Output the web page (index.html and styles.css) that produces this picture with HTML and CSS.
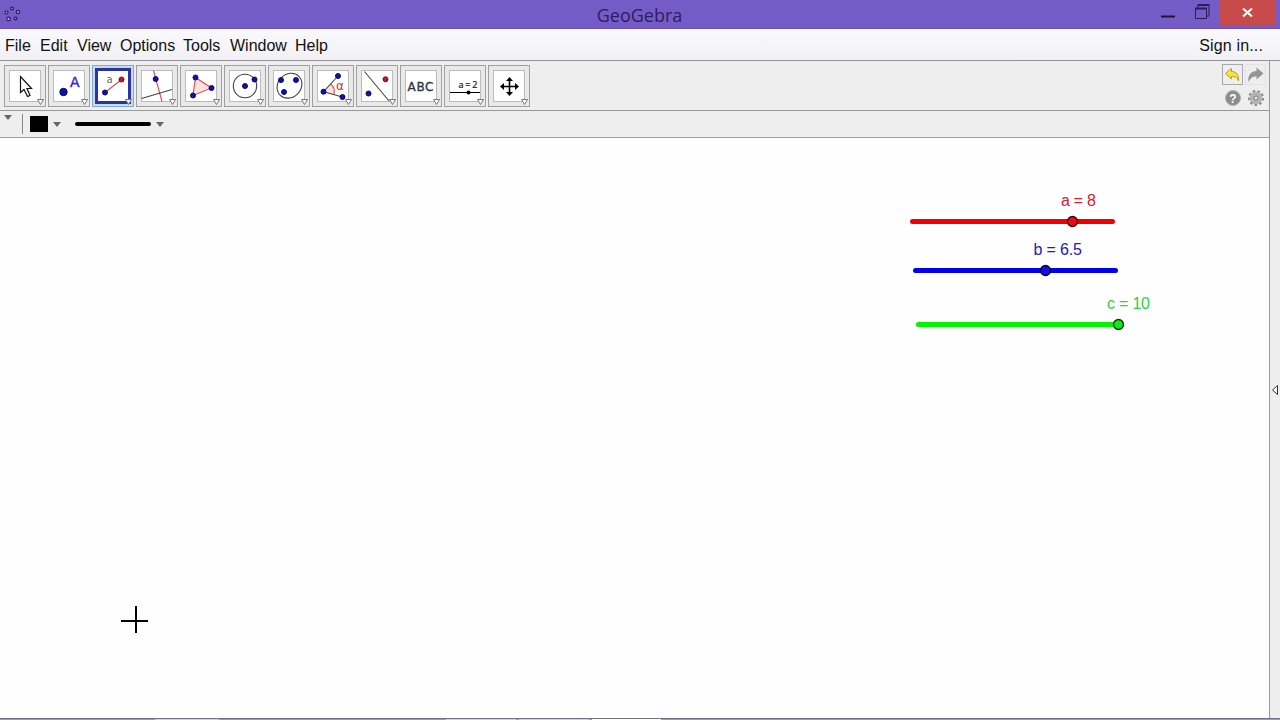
FILE: index.html
```html
<!DOCTYPE html>
<html lang="en">
<head>
  <meta charset="UTF-8">
  <title>GeoGebra</title>
  <link rel="stylesheet" href="styles.css">
</head>
<body>
  <div class="window">
    <div class="titlebar">
      <svg class="logo" width="18" height="16" viewBox="0 0 18 16">
        <g fill="#a99ce0" stroke="#2c1d60" stroke-width="1.200">
          <circle cx="8" cy="2.500" r="1.400"/><circle cx="14" cy="6" r="1.700"/><circle cx="11.500" cy="12.500" r="1.300"/>
          <circle cx="4.500" cy="13" r="1.800"/><circle cx="2.500" cy="6.500" r="1.500"/>
        </g>
      </svg>
      <div class="title">GeoGebra</div>
      <div class="controls">
        <svg width="70" height="29" viewBox="0 0 70 29">
          <path d="M12 16.500H26" stroke="#211638" stroke-width="2"/>
          <path d="M46.500 8.500h11v10h-11zM49 8V5.500h11V16h-2" fill="none" stroke="#2c1c5c"/>
          <path d="M46 8.500h12M48.500 5h12" stroke="#2c1c5c" stroke-width="2"/>
        </svg>
        <div class="close">
          <svg width="11" height="9" viewBox="0 0 11 9"><path d="M1 .5L10 8.500M10 .5L1 8.500" stroke="#fff" stroke-width="2"/></svg>
        </div>
      </div>
    </div>

    <div class="menubar">
      <div class="menu">
        <span class="file">File</span>
        <span class="edit">Edit</span>
        <span class="view">View</span>
        <span class="options">Options</span>
        <span class="tools">Tools</span>
        <span class="win">Window</span>
        <span>Help</span>
      </div>
      <span class="signin">Sign in...</span>
    </div>

    <div class="content">
      <div class="main">
        <div class="toolbar">
          <div class="buttons">
            <div class="tool">
              <svg width="42" height="42" viewBox="0 0 42 42">
                <path d="M16.500 11.500V27.500L20 24.500L23.500 31.500L26 30.500L23 23.500H27.500Z" fill="#fff" stroke="#111" stroke-width="1.2"/>
                <path class="more" d="M33.500 34.500h6l-3 5z"/>
              </svg>
            </div>
            <div class="tool">
              <svg width="42" height="42" viewBox="0 0 42 42">
                <circle class="pt" cx="15.500" cy="27" r="3.700"/>
                <text class="label-a" x="22" y="22">A</text>
                <path class="more" d="M33.500 34.500h6l-3 5z"/>
              </svg>
            </div>
            <div class="tool selected">
              <svg width="42" height="42" viewBox="0 0 42 42">
                <path class="red" d="M13 27.500L29.500 14.500"/>
                <circle class="pt" cx="13" cy="27.500" r="2.500"/>
                <circle class="pt-red" cx="29.500" cy="14.500" r="2.500"/>
                <text class="label-seg" x="14.500" y="18">a</text>
                <path class="more" d="M33.500 34.500h6l-3 5z"/>
              </svg>
            </div>
            <div class="tool">
              <svg width="42" height="42" viewBox="0 0 42 42">
                <path class="red" d="M17.500 5.500L26 36.500"/>
                <path class="dark" d="M5.500 33.500L36 24.500"/>
                <circle class="pt" cx="19.700" cy="14" r="2.500"/>
                <path class="more" d="M33.500 34.500h6l-3 5z"/>
              </svg>
            </div>
            <div class="tool">
              <svg width="42" height="42" viewBox="0 0 42 42">
                <path class="red area" d="M15.500 12.500L31.500 23L13 30.500Z"/>
                <circle class="pt" cx="15.500" cy="12.500" r="2.500"/>
                <circle class="pt" cx="31.500" cy="23" r="2.500"/>
                <circle class="pt" cx="13" cy="30.500" r="2.500"/>
                <path class="more" d="M33.500 34.500h6l-3 5z"/>
              </svg>
            </div>
            <div class="tool">
              <svg width="42" height="42" viewBox="0 0 42 42">
                <circle class="dark" cx="21" cy="21" r="11.700"/>
                <circle class="pt" cx="21" cy="21" r="2.500"/>
                <circle class="pt" cx="30.500" cy="14.500" r="2.500"/>
                <path class="more" d="M33.500 34.500h6l-3 5z"/>
              </svg>
            </div>
            <div class="tool">
              <svg width="42" height="42" viewBox="0 0 42 42">
                <ellipse class="dark" cx="21.500" cy="20.700" rx="13.300" ry="11.500" transform="rotate(-45 21.500 20.700)"/>
                <circle class="pt" cx="13" cy="15" r="2.500"/>
                <circle class="pt" cx="28" cy="15" r="2.500"/>
                <circle class="pt" cx="16" cy="27" r="2.500"/>
                <path class="more" d="M33.500 34.500h6l-3 5z"/>
              </svg>
            </div>
            <div class="tool">
              <svg width="42" height="42" viewBox="0 0 42 42">
                <path d="M11.500 26.700L19 18.500Q23.500 22.500 22 29.500Z" fill="#ffe0dc"/>
                <path class="red" d="M18.500 19Q23.500 22.500 22 29.500"/>
                <path class="dark" d="M26 11L11.500 26.700L30.500 32"/>
                <circle class="pt" cx="26" cy="11" r="2.500"/>
                <circle class="pt" cx="11.500" cy="26.700" r="2.500"/>
                <circle class="pt" cx="30.500" cy="32" r="2.500"/>
                <text class="alpha" x="24" y="25">α</text>
                <path class="more" d="M33.500 34.500h6l-3 5z"/>
              </svg>
            </div>
            <div class="tool">
              <svg width="42" height="42" viewBox="0 0 42 42">
                <path class="dark" d="M8.500 6.500L33 36"/>
                <circle class="pt" cx="12.500" cy="28.500" r="2.500"/>
                <circle class="pt-red" cx="29.500" cy="14.300" r="2.500"/>
                <path class="more" d="M33.500 34.500h6l-3 5z"/>
              </svg>
            </div>
            <div class="tool">
              <svg width="42" height="42" viewBox="0 0 42 42">
                <text class="abc" x="7.500" y="25.500" textLength="26">ABC</text>
                <path class="more" d="M33.500 34.500h6l-3 5z"/>
              </svg>
            </div>
            <div class="tool">
              <svg width="42" height="42" viewBox="0 0 42 42">
                <text class="a2" x="14.500" y="23" textLength="19">a=2</text>
                <path d="M6 27.500H36" stroke="#000"/>
                <circle cx="24.500" cy="27.500" r="2"/>
                <path class="more" d="M33.500 34.500h6l-3 5z"/>
              </svg>
            </div>
            <div class="tool">
              <svg width="42" height="42" viewBox="0 0 42 42">
                <path d="M21.500 14V29M14 21.500H29" stroke="#000" stroke-width="1.600"/>
                <path d="M21.500 12l3.500 4h-7zM21.500 31l3.500-4h-7zM12 21.500l4-3.500v7zM31 21.500l-4-3.500v7z"/>
                <path class="more" d="M33.500 34.500h6l-3 5z"/>
              </svg>
            </div>
          </div>
          <div class="actions">
            <div class="action undo">
              <svg width="17" height="16" viewBox="0 0 17 16"><path d="M1.500 6.500L7.500 1.500V4.500C12.500 4.500 15 8 14.500 14C13 10.500 11 9 7.500 9.500V12Z" fill="#f5e53a" stroke="#b59f18"/></svg>
            </div>
            <div class="action redo">
              <svg width="17" height="16" viewBox="0 0 17 16"><path d="M16.500 6.500L9.500 .5V4C4 4 .5 8 1.500 15C4 10.500 6 9.500 9.500 9.500V12.500Z" fill="#959595"/></svg>
            </div>
            <div class="action">
              <svg width="18" height="18" viewBox="0 0 18 18"><circle cx="9" cy="9" r="7.500" fill="#8c8c8c" stroke="#b0b0b0"/><text class="question" x="9" y="13.500">?</text></svg>
            </div>
            <div class="action">
              <svg width="18" height="18" viewBox="0 0 18 18">
                <circle cx="9" cy="9" r="6.800" fill="none" stroke="#8c8c8c" stroke-width="2.400" stroke-dasharray="2.600 2.150"/>
                <circle cx="9" cy="9" r="4.200" fill="none" stroke="#b4b4b4" stroke-width="4"/>
                <circle cx="9" cy="9" r="2" fill="#eee" stroke="#777"/>
              </svg>
            </div>
          </div>
        </div>

        <div class="stylebar">
          <span class="arrow first"></span>
          <span class="divider"></span>
          <span class="swatch"></span>
          <span class="arrow"></span>
          <span class="line"></span>
          <span class="arrow"></span>
        </div>

        <div class="canvas">
          <svg width="1269" height="580" viewBox="0 138 1269 580">
            <g stroke-width="5" stroke-linecap="round">
              <path d="M912.500 221.500H1112.500" stroke="#f00000"/>
              <path d="M915.500 270.500H1115.500" stroke="#0000f0"/>
              <path d="M918.500 324.500H1118.500" stroke="#00f500"/>
            </g>
            <g stroke-width="1.300">
              <circle cx="1072.500" cy="221.500" r="5" fill="#e01020" stroke="#400"/>
              <circle cx="1045.500" cy="270.500" r="5" fill="#1212d8" stroke="#004"/>
              <circle cx="1118.500" cy="324.500" r="5" fill="#10e818" stroke="#030"/>
            </g>
            <text class="value" x="1061" y="206" textLength="35" fill="#d42030">a = 8</text>
            <text class="value" x="1033.500" y="255" textLength="48.500" fill="#2020b8">b = 6.5</text>
            <text class="value" x="1107" y="309" textLength="43" fill="#30d040">c = 10</text>
            <path d="M121 621H148M136 606V633" stroke="#000" stroke-width="2"/>
          </svg>
        </div>
      </div>
      <div class="side">
        <svg width="8" height="12" viewBox="0 0 8 12"><path d="M6.500 1.500V10.500L1.500 6Z" fill="#fff" stroke="#333"/></svg>
      </div>
    </div>
    <div class="taskbar">
      <span class="task t1"></span>
      <span class="task t2"></span>
      <span class="task t3"></span>
      <span class="task t4"></span>
    </div>
  </div>
</body>
</html>
```
FILE: styles.css
```css
*{
  box-sizing: border-box;
}
body{
  margin: 0;
  background: #fff;
  font-family: "Liberation Sans", Arial, sans-serif;
}
svg{
  display: block;
}
.window{
  display: flex;
  flex-direction: column;
  width: 1280px;
  height: 720px;
  overflow: hidden;
}

/* title bar */
.titlebar{
  display: grid;
  grid-template-columns: 150px 1fr 131px;
  height: 29px;
  background: #745bc5;
  border-bottom: 1px solid #6a52b4;
}
.logo{
  margin: 6px 0 0 4px;
}
.title{
  padding-top: 3px;
  padding-right: 20px;
  text-align: center;
  font: 18px/25px "Open Sans", sans-serif;
  color: #2f1c60;
}
.controls{
  display: flex;
}
.close{
  display: flex;
  align-items: center;
  justify-content: center;
  width: 57px;
  height: 25px;
  background: #c84b4c;
}

/* menu */
.menubar{
  display: flex;
  justify-content: space-between;
  height: 32px;
  padding: 0 17px 0 5px;
  border-bottom: 1px solid #949494;
  background: linear-gradient(#fafafd, #f1f1f5);
  font-size: 16px;
  line-height: 33px;
  color: #111;
}
.menu{
  display: flex;
}
.file{ width: 35px; }
.edit{ width: 37px; }
.view{ width: 43px; }
.options{ width: 63px; }
.tools{ width: 47px; }
.win{ width: 65px; }
.signin{
  letter-spacing: .15px;
}

.content{
  display: flex;
  flex: 1;
  min-height: 0;
}
.main{
  display: flex;
  flex-direction: column;
  width: 1269px;
}

/* toolbar */
.toolbar{
  display: flex;
  justify-content: space-between;
  height: 50px;
  padding: 4px 3px 0 4px;
  background: #eee;
  border-bottom: 1px solid #999;
}
.buttons{
  display: flex;
  gap: 2px;
}
.tool{
  width: 42px;
  height: 42px;
  border: 1px solid #a0a0a0;
  background: linear-gradient(#fff, #fff) center / 30px 30px no-repeat, linear-gradient(#bbb, #bbb) center / 32px 32px no-repeat, #e9e9e9;
}
.tool svg{
  margin: -1px;
}
.tool.selected{
  border-color: #7fa8dc;
  background: linear-gradient(#fff, #fff) center / 30px 30px no-repeat, linear-gradient(#2c32a0, #2c32a0) center / 36px 36px no-repeat, #c5dcf5;
}
.pt{
  fill: #1010b0;
  stroke: #0a0a60;
}
.pt-red{
  fill: #c01828;
  stroke: #701018;
}
.red{
  fill: none;
  stroke: #df4a4a;
  stroke-width: 1.1;
}
.area{
  fill: #ffe2df;
}
.dark{
  fill: none;
  stroke: #444;
  stroke-width: 1.1;
}
.more{
  fill: #fff;
  stroke: #777;
}
.label-a{
  font: 14px "DejaVu Sans", sans-serif;
  fill: #3a22cc;
  stroke: #3a22cc;
  stroke-width: .4;
}
.label-seg{
  font: 10px "DejaVu Sans", sans-serif;
  fill: #666;
}
.alpha{
  font: 12px "DejaVu Sans", sans-serif;
  fill: #d02838;
}
.abc{
  font: 12px "DejaVu Sans", sans-serif;
  fill: #2b3140;
  stroke: #2b3140;
  stroke-width: .3;
}
.a2{
  font: 9px "Open Sans", sans-serif;
  fill: #111;
  stroke: #111;
  stroke-width: .2;
}
.actions{
  display: grid;
  grid-template-columns: 21px 21px;
  grid-template-rows: 21px 21px;
  gap: 2px;
  margin-top: -1px;
}
.action{
  display: flex;
  align-items: center;
  justify-content: center;
}
.undo{
  border: 1px solid #a9a9b5;
}
.redo{
  border: 1px solid #e2e2e2;
}
.question{
  font: bold 12px "Liberation Sans", sans-serif;
  text-anchor: middle;
  fill: #fff;
}

/* style bar */
.stylebar{
  display: flex;
  align-items: center;
  height: 27px;
  padding-left: 4px;
  background: #eee;
  border-bottom: 1px solid #a0a0a0;
}
.arrow{
  border: 4.5px solid transparent;
  border-top: 5px solid #666;
  border-bottom: 0;
}
.first{
  margin-top: -14px;
}
.divider{
  width: 1px;
  height: 20px;
  margin: 0 7px 0 10px;
  background: #888;
}
.swatch{
  width: 18px;
  height: 16px;
  margin-right: 5px;
  background: #000;
}
.line{
  width: 76px;
  height: 4px;
  margin: 0 5px 0 14px;
  border-radius: 2px;
  background: #000;
}

.canvas{
  flex: 1;
  min-height: 0;
  overflow: hidden;
  background: #fefefe;
}
.value{
  font-size: 16px;
}
.side{
  width: 11px;
  padding: 323px 0 0 1px;
  border-left: 1px solid #999;
  background: #eee;
}

/* top edge of the desktop taskbar */
.taskbar{
  display: flex;
  height: 2px;
  padding-left: 155px;
  background: #a294c4;
  border-top: 1px solid #777085;
}
.task{
  height: 1px;
  background: #d4cdec;
}
.t1{ width: 64px; margin-right: 227px; }
.t2{ width: 70px; margin-right: 3px; }
.t3{ width: 70px; margin-right: 3px; }
.t4{ width: 69px; background: #fff; }
```
